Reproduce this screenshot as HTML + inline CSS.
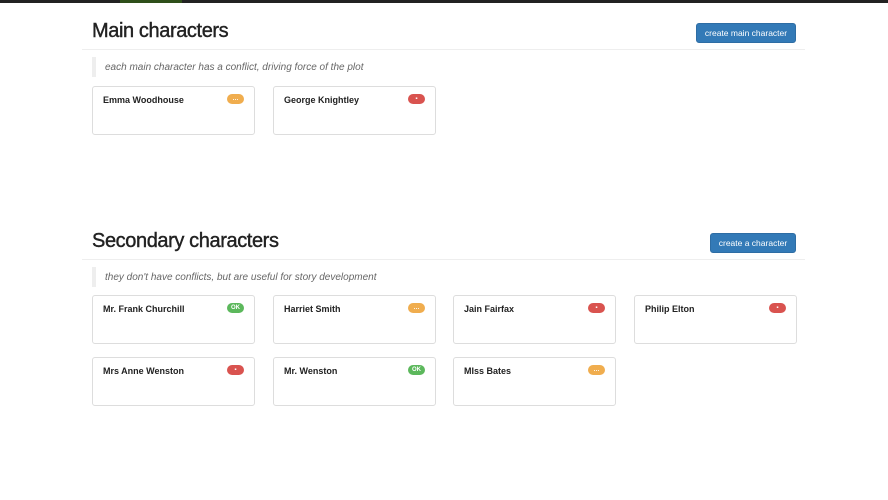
<!DOCTYPE html>
<html><head><style>
body{margin:0;width:888px;height:500px;background:#fff;font-family:"Liberation Sans",sans-serif;position:relative;overflow:hidden;color:#333}
.top{position:absolute;left:0;top:0;width:888px;height:3px;background:#222}
.top i{position:absolute;left:120px;width:62px;height:3px;background:#2f4f1a}
h1{position:absolute;margin:0;font-size:20px;font-weight:normal;left:92px;letter-spacing:-0.4px;color:#222;-webkit-text-stroke:0.4px #222}
.hr{position:absolute;left:82px;width:723px;height:1px;background:#eee}
.q{position:absolute;left:92px;width:700px;height:20px;border-left:4px solid #eee;font-style:italic;font-size:10px;color:#666;line-height:21px;padding-left:9px}
.btn{position:absolute;height:20px;background:#337ab7;border:1px solid #2e6da4;border-radius:3px;color:#fff;font-size:8.5px;line-height:18px;text-align:center;box-sizing:border-box}
.c{position:absolute;width:163px;height:49px;border:1px solid #ddd;border-radius:3px;box-sizing:border-box;font-size:9px;font-weight:bold;color:#222;padding:8px 0 0 10px}
.b{position:absolute;right:10px;top:7px;width:17px;height:10px;border-radius:5px;font-size:6px;color:#fff;text-align:center;line-height:10px;font-weight:bold}
.o{background:#f0ad4e}.r{background:#d9534f}.g{background:#5cb85c}
</style></head><body>
<div class="top"><i></i></div>
<h1 style="top:20px">Main characters</h1>
<div class="btn" style="left:696px;top:23px;width:100px">create main character</div>
<div class="hr" style="top:49px"></div>
<div class="q" style="top:57px">each main character has a conflict, driving force of the plot</div>
<div class="c" style="left:92px;top:86px">Emma Woodhouse<span class="b o">…</span></div>
<div class="c" style="left:273px;top:86px">George Knightley<span class="b r">▪</span></div>

<h1 style="top:230px">Secondary characters</h1>
<div class="btn" style="left:710px;top:233px;width:86px">create a character</div>
<div class="hr" style="top:259px"></div>
<div class="q" style="top:267px">they don't have conflicts, but are useful for story development</div>
<div class="c" style="left:92px;top:295px">Mr. Frank Churchill<span class="b g">OK</span></div>
<div class="c" style="left:273px;top:295px">Harriet Smith<span class="b o">…</span></div>
<div class="c" style="left:453px;top:295px">Jain Fairfax<span class="b r">▪</span></div>
<div class="c" style="left:634px;top:295px">Philip Elton<span class="b r">▪</span></div>
<div class="c" style="left:92px;top:357px">Mrs Anne Wenston<span class="b r">▪</span></div>
<div class="c" style="left:273px;top:357px">Mr. Wenston<span class="b g">OK</span></div>
<div class="c" style="left:453px;top:357px">MIss Bates<span class="b o">…</span></div>
</body></html>
